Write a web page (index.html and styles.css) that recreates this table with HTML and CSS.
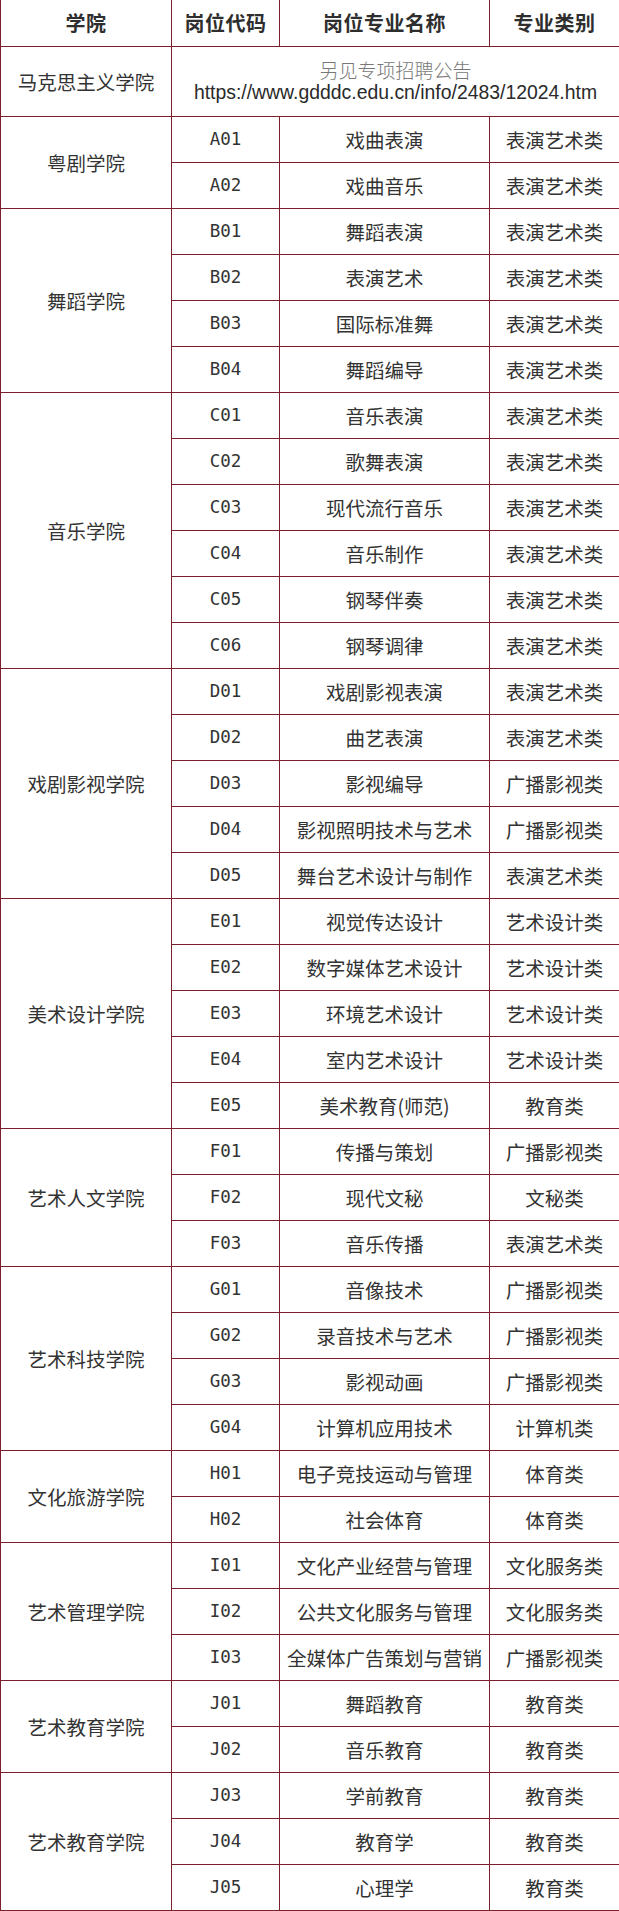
FILE: index.html
```html
<!DOCTYPE html>
<html lang="zh-CN">
<head>
<meta charset="utf-8">
<title>岗位表</title>
<link rel="stylesheet" href="styles.css">
</head>
<body>
<table class="jobs">
<colgroup><col class="c1"><col class="c2"><col class="c3"><col class="c4"></colgroup>
<thead>
<tr class="head"><th>学院</th><th>岗位代码</th><th>岗位专业名称</th><th>专业类别</th></tr>
</thead>
<tbody>
<tr class="marx"><td>马克思主义学院</td><td colspan="3"><div class="note">另见专项招聘公告</div><div class="url">https://www.gdddc.edu.cn/info/2483/12024.htm</div></td></tr>
<tr><td rowspan="2">粤剧学院</td><td class="code">A01</td><td>戏曲表演</td><td>表演艺术类</td></tr>
<tr><td class="code">A02</td><td>戏曲音乐</td><td>表演艺术类</td></tr>
<tr><td rowspan="4">舞蹈学院</td><td class="code">B01</td><td>舞蹈表演</td><td>表演艺术类</td></tr>
<tr><td class="code">B02</td><td>表演艺术</td><td>表演艺术类</td></tr>
<tr><td class="code">B03</td><td>国际标准舞</td><td>表演艺术类</td></tr>
<tr><td class="code">B04</td><td>舞蹈编导</td><td>表演艺术类</td></tr>
<tr><td rowspan="6">音乐学院</td><td class="code">C01</td><td>音乐表演</td><td>表演艺术类</td></tr>
<tr><td class="code">C02</td><td>歌舞表演</td><td>表演艺术类</td></tr>
<tr><td class="code">C03</td><td>现代流行音乐</td><td>表演艺术类</td></tr>
<tr><td class="code">C04</td><td>音乐制作</td><td>表演艺术类</td></tr>
<tr><td class="code">C05</td><td>钢琴伴奏</td><td>表演艺术类</td></tr>
<tr><td class="code">C06</td><td>钢琴调律</td><td>表演艺术类</td></tr>
<tr><td rowspan="5">戏剧影视学院</td><td class="code">D01</td><td>戏剧影视表演</td><td>表演艺术类</td></tr>
<tr><td class="code">D02</td><td>曲艺表演</td><td>表演艺术类</td></tr>
<tr><td class="code">D03</td><td>影视编导</td><td>广播影视类</td></tr>
<tr><td class="code">D04</td><td>影视照明技术与艺术</td><td>广播影视类</td></tr>
<tr><td class="code">D05</td><td>舞台艺术设计与制作</td><td>表演艺术类</td></tr>
<tr><td rowspan="5">美术设计学院</td><td class="code">E01</td><td>视觉传达设计</td><td>艺术设计类</td></tr>
<tr><td class="code">E02</td><td>数字媒体艺术设计</td><td>艺术设计类</td></tr>
<tr><td class="code">E03</td><td>环境艺术设计</td><td>艺术设计类</td></tr>
<tr><td class="code">E04</td><td>室内艺术设计</td><td>艺术设计类</td></tr>
<tr><td class="code">E05</td><td>美术教育(师范)</td><td>教育类</td></tr>
<tr><td rowspan="3">艺术人文学院</td><td class="code">F01</td><td>传播与策划</td><td>广播影视类</td></tr>
<tr><td class="code">F02</td><td>现代文秘</td><td>文秘类</td></tr>
<tr><td class="code">F03</td><td>音乐传播</td><td>表演艺术类</td></tr>
<tr><td rowspan="4">艺术科技学院</td><td class="code">G01</td><td>音像技术</td><td>广播影视类</td></tr>
<tr><td class="code">G02</td><td>录音技术与艺术</td><td>广播影视类</td></tr>
<tr><td class="code">G03</td><td>影视动画</td><td>广播影视类</td></tr>
<tr><td class="code">G04</td><td>计算机应用技术</td><td>计算机类</td></tr>
<tr><td rowspan="2">文化旅游学院</td><td class="code">H01</td><td>电子竞技运动与管理</td><td>体育类</td></tr>
<tr><td class="code">H02</td><td>社会体育</td><td>体育类</td></tr>
<tr><td rowspan="3">艺术管理学院</td><td class="code">I01</td><td>文化产业经营与管理</td><td>文化服务类</td></tr>
<tr><td class="code">I02</td><td>公共文化服务与管理</td><td>文化服务类</td></tr>
<tr><td class="code">I03</td><td>全媒体广告策划与营销</td><td>广播影视类</td></tr>
<tr><td rowspan="2">艺术教育学院</td><td class="code">J01</td><td>舞蹈教育</td><td>教育类</td></tr>
<tr><td class="code">J02</td><td>音乐教育</td><td>教育类</td></tr>
<tr><td rowspan="3">艺术教育学院</td><td class="code">J03</td><td>学前教育</td><td>教育类</td></tr>
<tr><td class="code">J04</td><td>教育学</td><td>教育类</td></tr>
<tr><td class="code">J05</td><td>心理学</td><td>教育类</td></tr>
</tbody>
</table>
</body>
</html>
```
FILE: styles.css
```css
html, body {
  margin: 0;
  padding: 0;
  background: #ffffff;
}
.jobs {
  border-collapse: collapse;
  table-layout: fixed;
  width: 619px;
  font-family: "Noto Sans CJK SC", "Liberation Sans", sans-serif;
  font-size: 19.5px;
  color: #333333;
}
.c1 { width: 171px; }
.c2 { width: 108px; }
.c3 { width: 210px; }
.c4 { width: 130px; }
.jobs th, .jobs td {
  border: 1px solid #7a1f2b;
  padding: 0;
  text-align: center;
  vertical-align: middle;
  line-height: 23px;
  white-space: nowrap;
}
.jobs thead th {
  border-top: none;
}
.jobs tr { height: 46px; }
.jobs th {
  font-weight: 700;
  font-size: 20px;
  color: #2e2e2e;
  letter-spacing: 0.5px;
}
.jobs .marx { height: 70px; }
.note {
  color: #777777;
  font-weight: 300;
  font-size: 19px;
  line-height: 23px;
}
.url {
  font-family: "Liberation Sans", Arial, sans-serif;
  font-size: 19.4px;
  line-height: 23px;
  color: #2a2a2a;
}
.code {
  font-family: "DejaVu Sans Mono", monospace;
  font-size: 17.5px;
  color: #333333;
}
```
